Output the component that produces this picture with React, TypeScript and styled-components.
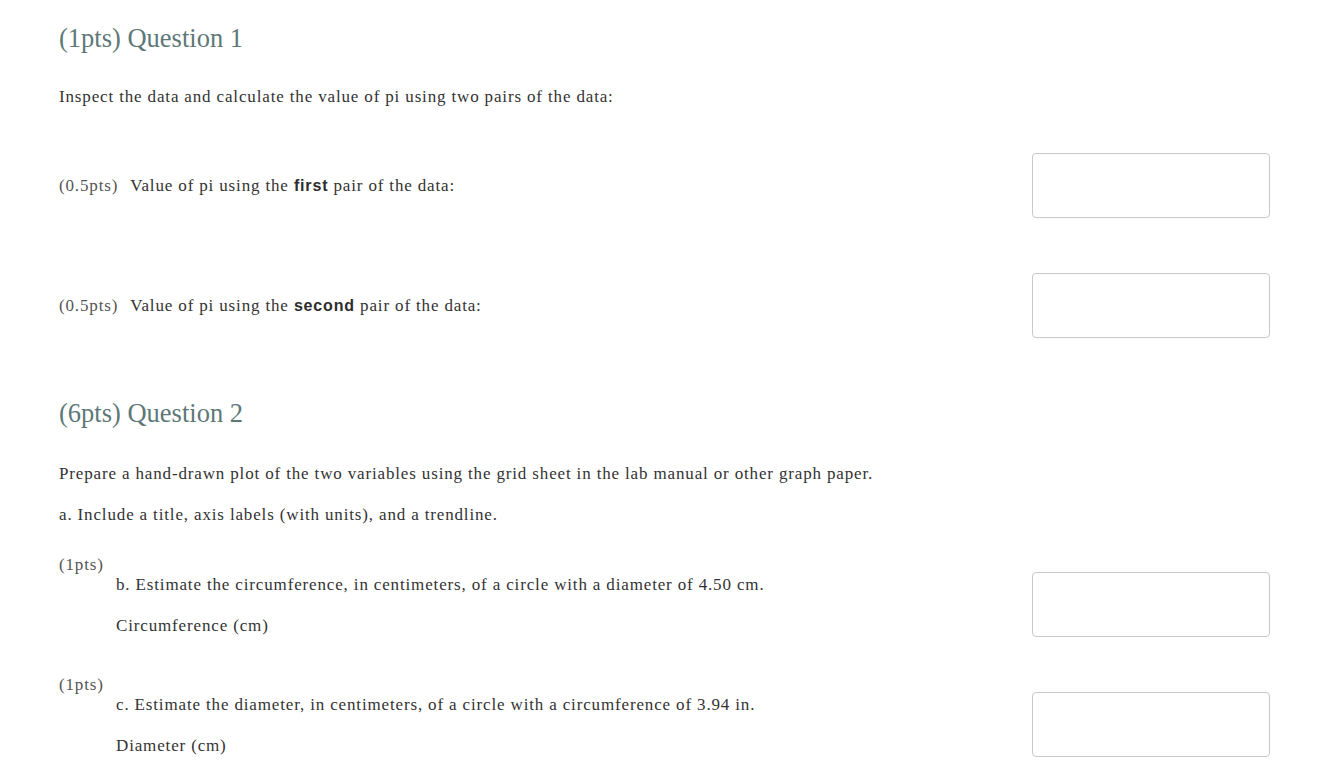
import React from "react";
import styled, { createGlobalStyle } from "styled-components";

const GlobalStyle = createGlobalStyle`
  html, body {
    margin: 0;
    padding: 0;
    background: #fff;
  }
  body {
    font-family: "Liberation Serif", "Times New Roman", serif;
    color: #333;
  }
`;

const Page = styled.div`
  padding: 22px 61px 0 59px;
`;

const Section = styled.section<{ $gap?: number }>`
  margin-top: ${(p) => p.$gap ?? 0}px;
`;

const Heading = styled.h2`
  margin: 0;
  font-weight: normal;
  font-size: 26.5px;
  line-height: 32px;
  color: #5e7878;
`;

const Text = styled.p<{ $top?: number }>`
  margin: ${(p) => p.$top ?? 0}px 0 0;
  font-size: 17px;
  line-height: 24px;
  letter-spacing: 0.85px;
`;

const Row = styled.div<{ $top: number }>`
  display: flex;
  align-items: center;
  justify-content: space-between;
  margin-top: ${(p) => p.$top}px;
`;

const Label = styled.div`
  display: flex;
  align-items: baseline;
  font-size: 17px;
  line-height: 24px;
  letter-spacing: 0.85px;
`;

const Pts = styled.span`
  color: #555;
  margin-right: 12px;
`;

const Strong = styled.b`
  font-family: "Liberation Sans", Arial, sans-serif;
  font-weight: bold;
  font-size: 16px;
  color: #2d2d2d;
`;

const AnswerBox = styled.input`
  width: 238px;
  height: 65px;
  box-sizing: border-box;
  border: 1px solid #c8c8c8;
  border-radius: 4px;
  background: #fff;
  flex-shrink: 0;
`;

const SubQuestion = styled.div<{ $top: number }>`
  margin-top: ${(p) => p.$top}px;
`;

const SubPts = styled.div`
  color: #555;
  font-size: 17px;
  line-height: 14px;
  letter-spacing: 0.85px;
`;

const SubRow = styled.div`
  display: flex;
  justify-content: space-between;
  align-items: flex-start;
`;

const SubBody = styled.div`
  padding: 1px 0 0 57px;
  font-size: 17px;
  line-height: 24px;
  letter-spacing: 0.85px;
`;

const SubLine = styled.p<{ $top?: number }>`
  margin: ${(p) => p.$top ?? 0}px 0 0;
`;

export default function App() {
  return (
    <>
      <GlobalStyle />
      <Page>
        <Section>
          <Heading>(1pts) Question 1</Heading>
          <Text $top={31}>
            Inspect the data and calculate the value of pi using two pairs of the data:
          </Text>
          <Row $top={44}>
            <Label>
              <Pts>(0.5pts)</Pts>
              <span>
                Value of pi using the <Strong>first</Strong> pair of the data:
              </span>
            </Label>
            <AnswerBox type="text" />
          </Row>
          <Row $top={55}>
            <Label>
              <Pts>(0.5pts)</Pts>
              <span>
                Value of pi using the <Strong>second</Strong> pair of the data:
              </span>
            </Label>
            <AnswerBox type="text" />
          </Row>
        </Section>

        <Section $gap={59}>
          <Heading>(6pts) Question 2</Heading>
          <Text $top={33}>
            Prepare a hand-drawn plot of the two variables using the grid sheet in the lab manual or other graph paper.
          </Text>
          <Text $top={17}>a. Include a title, axis labels (with units), and a trendline.</Text>

          <SubQuestion $top={31}>
            <SubPts>(1pts)</SubPts>
            <SubRow>
              <SubBody>
                <SubLine>
                  b. Estimate the circumference, in centimeters, of a circle with a diameter of 4.50 cm.
                </SubLine>
                <SubLine $top={17}>Circumference (cm)</SubLine>
              </SubBody>
              <AnswerBox type="text" />
            </SubRow>
          </SubQuestion>

          <SubQuestion $top={40}>
            <SubPts>(1pts)</SubPts>
            <SubRow>
              <SubBody>
                <SubLine>
                  c. Estimate the diameter, in centimeters, of a circle with a circumference of 3.94 in.
                </SubLine>
                <SubLine $top={17}>Diameter (cm)</SubLine>
              </SubBody>
              <AnswerBox type="text" />
            </SubRow>
          </SubQuestion>
        </Section>
      </Page>
    </>
  );
}
